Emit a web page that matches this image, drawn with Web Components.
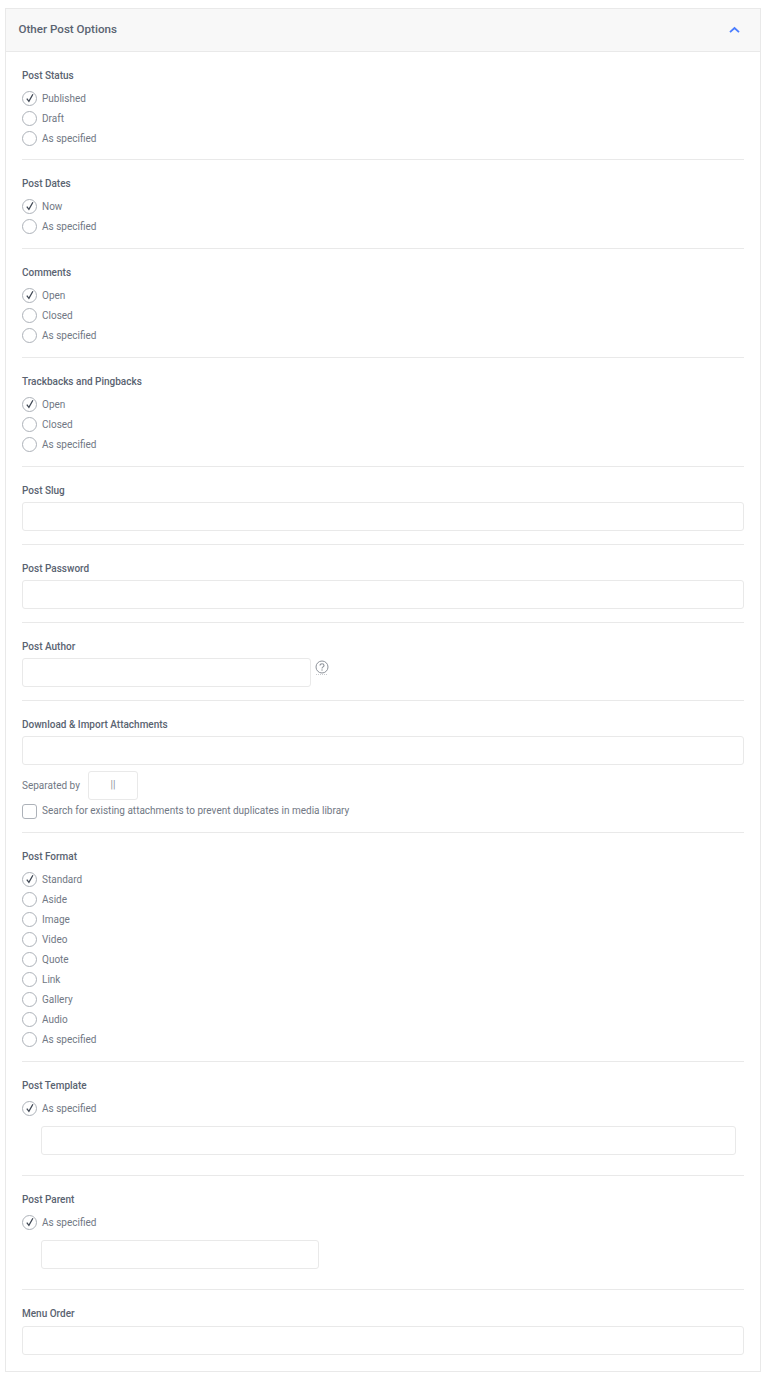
<!DOCTYPE html>
<html><head><meta charset="utf-8">
<style>
html,body{margin:0;padding:0;background:#fff}
body{font-family:Roboto,"Liberation Sans",sans-serif;padding:8px 7px 8px 5px}
</style></head><body>
<option-panel title-text="Other Post Options">
  <opt-section label="Post Status" first><opt-radio checked>Published</opt-radio><opt-radio>Draft</opt-radio><opt-radio>As specified</opt-radio></opt-section>
  <opt-section label="Post Dates"><opt-radio checked>Now</opt-radio><opt-radio>As specified</opt-radio></opt-section>
  <opt-section label="Comments"><opt-radio checked>Open</opt-radio><opt-radio>Closed</opt-radio><opt-radio>As specified</opt-radio></opt-section>
  <opt-section label="Trackbacks and Pingbacks"><opt-radio checked>Open</opt-radio><opt-radio>Closed</opt-radio><opt-radio>As specified</opt-radio></opt-section>
  <opt-section label="Post Slug" kind="input"><opt-input></opt-input></opt-section>
  <opt-section label="Post Password" kind="input"><opt-input></opt-input></opt-section>
  <opt-section label="Post Author" kind="input" half><author-row></author-row></opt-section>
  <opt-section label="Download &amp; Import Attachments" kind="input" tight><attach-fields></attach-fields></opt-section>
  <opt-section label="Post Format"><opt-radio checked>Standard</opt-radio><opt-radio>Aside</opt-radio><opt-radio>Image</opt-radio><opt-radio>Video</opt-radio><opt-radio>Quote</opt-radio><opt-radio>Link</opt-radio><opt-radio>Gallery</opt-radio><opt-radio>Audio</opt-radio><opt-radio>As specified</opt-radio></opt-section>
  <opt-section label="Post Template"><opt-radio checked>As specified</opt-radio><opt-input sub></opt-input></opt-section>
  <opt-section label="Post Parent"><opt-radio checked>As specified</opt-radio><opt-input sub short></opt-input></opt-section>
  <opt-section label="Menu Order" kind="input" last><opt-input></opt-input></opt-section>
</option-panel>
<script>
function def(name, css, html){
  customElements.define(name, class extends HTMLElement{
    connectedCallback(){
      if(this.shadowRoot) return;
      const r=this.attachShadow({mode:'open'});
      r.innerHTML='<style>'+css+'</style>'+(typeof html==='function'?html(this):html);
    }
  });
}
def('option-panel',`
  :host{display:block;width:756px;box-sizing:border-box;border:1px solid #e9e9e9;background:#fff}
  header{height:43px;box-sizing:border-box;background:#f8f8f8;border-bottom:1px solid #e9e9e9;display:flex;align-items:center;justify-content:space-between;padding:0 20px 2px 12.5px}
  h2{margin:0;font:500 11.6px/16px Roboto,sans-serif;color:#5a6371}
  svg{display:block;margin-top:2px}
  main{padding:0 16px}
`,h=>`<header><h2>${h.getAttribute('title-text')}</h2><svg width="11" height="8" viewBox="0 0 11 8"><path d="M1 6.2 5.5 2 10 6.2" fill="none" stroke="#4a7dff" stroke-width="1.8"/></svg></header><main><slot></slot></main>`);
def('opt-section',`
  :host{display:block;padding:16px 0 12px;border-bottom:1px solid #e9e9e9}
  :host([first]){padding-bottom:11px}
  :host([kind=input]){padding-bottom:13px}
  :host([half]){padding-bottom:12.5px}
  :host([tight]){padding-bottom:11.3px}
  :host([last]){border-bottom:0;padding-bottom:16px}
  .l{font:500 10px/16px Roboto,sans-serif;color:#5a6371;margin-bottom:4px}
  :host([kind=input]) .l{margin-bottom:3px}
  :host([last]) .l{margin-bottom:4px}
`,h=>`<div class="l">${h.getAttribute('label').replace('&','&amp;')}</div><slot></slot>`);
def('opt-radio',`
  :host{display:flex;align-items:center;height:20px;gap:5px;font:400 10px/16px Roboto,sans-serif;color:#717884}
  .c{width:15px;height:15px;box-sizing:border-box;border:1.3px solid #adb2b9;border-radius:50%;background:#fff;flex:none;display:flex;align-items:center;justify-content:center}
  .t{padding-top:2px}
  svg{display:block}
`,h=>`<span class="c">${h.hasAttribute('checked')?'<svg width="10" height="10" viewBox="0 0 10 10"><path d="M1.8 5.6 3.9 8.4 7.9 1.2" fill="none" stroke="#414955" stroke-width="1.3"/></svg>':''}</span><span class="t"><slot></slot></span>`);
def('opt-input',`
  :host{display:block;height:29px;box-sizing:border-box;border:1px solid #e9e9e9;border-radius:3px;background:#fff}
  :host([sub]){margin:8px 8px 8.5px 19px;height:28.5px}
  :host([short]){width:277.5px;margin-right:0}
`,'');
def('author-row',`
  :host{display:flex;align-items:flex-start;gap:4.5px}
  .i{width:288.5px;height:29px;box-sizing:border-box;border:1px solid #e9e9e9;border-radius:3px}
  svg{display:block;margin-top:2px}
`,`<div class="i"></div><svg width="14" height="15" viewBox="0 0 14 15"><circle cx="7" cy="7" r="6" fill="none" stroke="#8d929a" stroke-width="1"/><path d="M5 5.6C5 4.4 5.9 3.8 7 3.8S9 4.5 9 5.5C9 6.9 7 6.8 7 8.4" fill="none" stroke="#8d929a" stroke-width="1.1"/><circle cx="7" cy="10" r=".7" fill="#8d929a"/><path d="M1 14.5H13" stroke="#c9ccd0" stroke-width="1" stroke-dasharray="1 1"/></svg>`);
def('attach-fields',`
  :host{display:block;color:#717884;font:400 10px/16px Roboto,sans-serif}
  .i{height:29px;box-sizing:border-box;border:1px solid #e9e9e9;border-radius:3px}
  .s{display:flex;align-items:center;gap:8px;margin-top:6px}
  .s>span{padding-top:2px}
  .v{width:50px;height:29px;box-sizing:border-box;border:1px solid #e9e9e9;border-radius:3px;display:flex;align-items:center;justify-content:center;color:#8d929a}
  .k{display:flex;align-items:center;gap:5px;height:20px;margin-top:1.5px}
  .b{width:15px;height:15px;box-sizing:border-box;border:1.3px solid #adb2b9;border-radius:3px;flex:none}
`,`<div class="i"></div><div class="s"><span>Separated by</span><div class="v">||</div></div><div class="k"><span class="b"></span><span>Search for existing attachments to prevent duplicates in media library</span></div>`);
</script>
</body></html>
